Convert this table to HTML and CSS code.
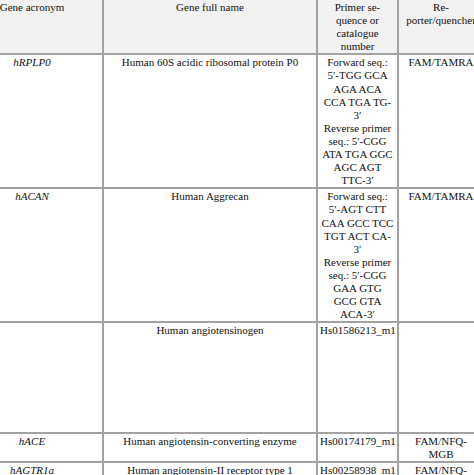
FILE: index.html
```html
<!DOCTYPE html>
<html>
<head>
<meta charset="utf-8">
<link rel="stylesheet" href="styles.css">
</head>
<body>
<div class="page">
<table class="genes">
  <colgroup>
    <col class="c1"><col class="c2"><col class="c3"><col class="c4">
  </colgroup>
  <thead>
    <tr>
      <th>Gene acronym</th>
      <th>Gene full name</th>
      <th>Primer se-<br>quence or<br>catalogue<br>number</th>
      <th>Re-<br>porter/quencher</th>
    </tr>
  </thead>
  <tbody>
    <tr>
      <td class="gene">hRPLP0</td>
      <td>Human 60S acidic ribosomal protein P0</td>
      <td>Forward seq.:<br>5′-TGG GCA<br>AGA ACA<br>CCA TGA TG-<br>3′<br>Reverse primer<br>seq.: 5′-CGG<br>ATA TGA GGC<br>AGC AGT<br>TTC-3′</td>
      <td>FAM/TAMRA</td>
    </tr>
    <tr>
      <td class="gene">hACAN</td>
      <td>Human Aggrecan</td>
      <td>Forward seq.:<br>5′-AGT CTT<br>CAA GCC TCC<br>TGT ACT CA-<br>3′<br>Reverse primer<br>seq.: 5′-CGG<br>GAA GTG<br>GCG GTA<br>ACA-3′</td>
      <td>FAM/TAMRA</td>
    </tr>
    <tr class="r-tall">
      <td class="gene"></td>
      <td>Human angiotensinogen</td>
      <td>Hs01586213_m1</td>
      <td></td>
    </tr>
    <tr>
      <td class="gene">hACE</td>
      <td>Human angiotensin-converting enzyme</td>
      <td>Hs00174179_m1</td>
      <td>FAM/NFQ-<br>MGB</td>
    </tr>
    <tr>
      <td class="gene">hAGTR1a</td>
      <td>Human angiotensin-II receptor type 1</td>
      <td>Hs00258938_m1</td>
      <td>FAM/NFQ-<br>MGB</td>
    </tr>
  </tbody>
</table>
</div>
</body>
</html>
```

FILE: styles.css
```css
html, body {
  margin: 0;
  padding: 0;
  background: #ffffff;
}

.page {
  width: 474px;
  height: 475px;
  overflow: hidden;
}

.genes {
  border-collapse: collapse;
  table-layout: fixed;
  width: 523px;
  margin-left: -40px;
  font-family: "Liberation Serif", "Times New Roman", serif;
  font-size: 11px;
  line-height: 13.1px;
  color: #111111;
}

.c1 { width: 142px; }
.c2 { width: 214px; }
.c3 { width: 81px; }
.c4 { width: 86px; }

.genes th,
.genes td {
  border: 2px solid #a2a2a2;
  padding: 1px 2px 0;
  text-align: center;
  vertical-align: top;
  white-space: nowrap;
  overflow: visible;
  box-sizing: border-box;
}

.genes th {
  font-weight: normal;
  background: #f2f2f2;
  border-top: none;
  height: 53px;
}

.gene {
  font-style: italic;
}

.r-tall td { height: 111px; }
```
